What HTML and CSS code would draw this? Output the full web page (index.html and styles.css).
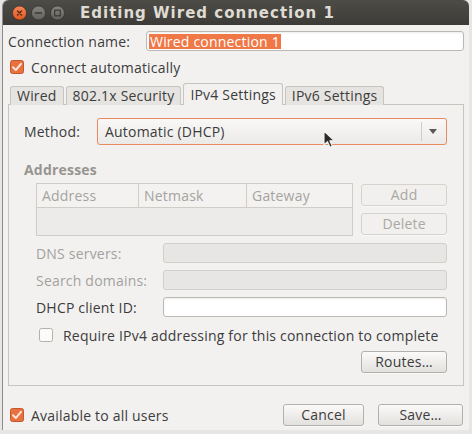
FILE: index.html
```html
<!DOCTYPE html>
<html lang="en">
<head>
  <meta charset="UTF-8">
  <title>Editing Wired connection 1</title>
  <link rel="stylesheet" href="styles.css">
</head>
<body>
  <div class="window">
    <div class="titlebar">
      <svg class="wm-buttons" width="56" height="16" viewBox="0 0 56 16">
        <defs>
          <linearGradient id="closeFill" x1="0" y1="0" x2="0" y2="1">
            <stop offset="0" stop-color="#f6875a"/>
            <stop offset="1" stop-color="#df5621"/>
          </linearGradient>
          <linearGradient id="greyFill" x1="0" y1="0" x2="0" y2="1">
            <stop offset="0" stop-color="#85847f"/>
            <stop offset="1" stop-color="#62615d"/>
          </linearGradient>
        </defs>
        <!-- close -->
        <circle cx="7.5" cy="8" r="7" fill="url(#closeFill)" stroke="#3a2a22" stroke-width="0.6"/>
        <path d="M5.5 6 L9.5 10 M9.5 6 L5.5 10" stroke="#5b2812" stroke-width="1.4" stroke-linecap="round"/>
        <!-- minimize -->
        <circle cx="26.5" cy="8" r="7" fill="url(#greyFill)" stroke="#2f2e2a" stroke-width="0.6"/>
        <path d="M23.5 8 L29.5 8" stroke="#3a3935" stroke-width="1.6" stroke-linecap="round"/>
        <!-- maximize -->
        <circle cx="45.5" cy="8" r="7" fill="url(#greyFill)" stroke="#2f2e2a" stroke-width="0.6"/>
        <rect x="42.7" y="5.2" width="5.6" height="5.6" fill="none" stroke="#3a3935" stroke-width="1.2"/>
      </svg>
      <div class="title">Editing Wired connection 1</div>
    </div>

    <div class="content">
      <div class="name-row">
        <span class="name-label">Connection name:</span>
        <div class="entry"><span class="selection">Wired connection 1</span></div>
      </div>

      <div class="check-row">
        <svg class="check" width="14" height="14" viewBox="0 0 14 14">
          <rect x="0.5" y="0.5" width="13" height="13" rx="2" fill="#e9713f" stroke="#c4582b"/>
          <path d="M3 7.2 L5.8 10 L11 3.8" fill="none" stroke="#fbe3d8" stroke-width="2" stroke-linecap="round" stroke-linejoin="round"/>
        </svg>
        <span>Connect automatically</span>
      </div>

      <div class="notebook">
        <div class="tabs">
          <div class="tab">Wired</div>
          <div class="tab">802.1x Security</div>
          <div class="tab active">IPv4 Settings</div>
          <div class="tab">IPv6 Settings</div>
        </div>

        <div class="page">
          <div class="method-row">
            <span class="method-label">Method:</span>
            <div class="combo">
              <span class="combo-text">Automatic (DHCP)</span>
              <span class="combo-sep"></span>
              <span class="combo-arrow"></span>
              <svg class="pointer" width="14" height="19" viewBox="0 0 14 19">
                <path d="M1 1 L1 15 L4.5 11.6 L7 17.2 L9.3 16.2 L6.8 10.8 L11.4 10.8 Z" fill="#2a2a2a" stroke="#f4f4f4" stroke-width="1.1" stroke-linejoin="round"/>
              </svg>
            </div>
          </div>

          <div class="section-title">Addresses</div>

          <div class="addresses">
            <div class="address-table">
              <div class="table-head">
                <span class="col col-address">Address</span>
                <span class="col col-netmask">Netmask</span>
                <span class="col col-gateway">Gateway</span>
              </div>
              <div class="table-body"></div>
            </div>
            <div class="address-buttons">
              <div class="button disabled">Add</div>
              <div class="button disabled">Delete</div>
            </div>
          </div>

          <div class="fields">
            <span class="field-label disabled-text">DNS servers:</span>
            <div class="entry disabled"></div>
            <span class="field-label disabled-text">Search domains:</span>
            <div class="entry disabled"></div>
            <span class="field-label">DHCP client ID:</span>
            <div class="entry"></div>
          </div>

          <div class="check-row require">
            <svg class="check" width="14" height="14" viewBox="0 0 14 14">
              <rect x="0.5" y="0.5" width="13" height="13" rx="2" fill="#fbfbfa" stroke="#b3b0ab"/>
            </svg>
            <span>Require IPv4 addressing for this connection to complete</span>
          </div>

          <div class="button routes">Routes…</div>
        </div>
      </div>

      <div class="footer">
        <div class="check-row">
          <svg class="check" width="14" height="14" viewBox="0 0 14 14">
            <rect x="0.5" y="0.5" width="13" height="13" rx="2" fill="#e9713f" stroke="#c4582b"/>
            <path d="M3 7.2 L5.8 10 L11 3.8" fill="none" stroke="#fbe3d8" stroke-width="2" stroke-linecap="round" stroke-linejoin="round"/>
          </svg>
          <span>Available to all users</span>
        </div>
        <div class="dialog-buttons">
          <div class="button cancel">Cancel</div>
          <div class="button save">Save…</div>
        </div>
      </div>
    </div>
  </div>
</body>
</html>
```

FILE: styles.css
```css
body {
  margin: 0;
  background: #e7e6e4;
  font-family: "Open Sans", "Noto Sans", sans-serif;
  font-size: 14px;
  letter-spacing: 0.2px;
  color: #3c3c3c;
}
.window {
  margin-left: 3px;
  width: 466px;
  height: 430px;
  background: #f2f1f0;
  border-radius: 6px 6px 0 0;
  box-shadow: -1px 0 0 #8d8c89, 0 1px 0 #d4d2cf;
  overflow: hidden;
}
.titlebar {
  height: 25px;
  background: linear-gradient(#4d4c47, #3c3b37);
  display: flex;
  align-items: center;
}
.wm-buttons {
  margin-left: 9px;
}
.title {
  margin-left: 12px;
  color: #dfdbd2;
  font-family: "DejaVu Sans", sans-serif;
  font-weight: bold;
  font-size: 15px;
  letter-spacing: 1px;
}
.content {
  padding: 0 5px;
  display: flex;
  flex-direction: column;
}
.name-row {
  display: flex;
  align-items: center;
  margin-top: 6px;
}
.name-label {
  width: 138px;
}
.entry {
  height: 20px;
  box-sizing: border-box;
  border: 1px solid #bcb9b4;
  border-radius: 3px;
  background: #fff;
  box-shadow: inset 0 1px 2px rgba(0, 0, 0, 0.08);
  display: flex;
  align-items: center;
}
.name-row .entry {
  width: 318px;
  padding-left: 2px;
}
.selection {
  background: #f07746;
  color: #fff;
  line-height: 15px;
  padding: 0 1px;
}
.check-row {
  display: flex;
  align-items: center;
  height: 20px;
}
.check {
  flex: none;
  margin-left: 2px;
  margin-right: 7px;
}
.content > .check-row {
  margin-top: 6px;
}
.notebook {
  margin-top: 6px;
}
.tabs {
  display: flex;
  align-items: flex-end;
  gap: 2px;
  height: 22px;
  padding-left: 2px;
  position: relative;
  z-index: 1;
  margin-bottom: -1px;
}
.tab {
  height: 19px;
  box-sizing: border-box;
  padding: 0 6px;
  border: 1px solid #c8c5c0;
  border-bottom: none;
  border-radius: 3px 3px 0 0;
  background: #e6e4e1;
  line-height: 18px;
}
.tab.active {
  height: 22px;
  background: #f2f1f0;
  line-height: 21px;
}
.page {
  border: 1px solid #c8c5c0;
  padding: 13px 16px 12px 15px;
  display: flex;
  flex-direction: column;
}
.method-row {
  display: flex;
  align-items: center;
}
.method-label {
  width: 73px;
}
.combo {
  flex: 1;
  height: 27px;
  box-sizing: border-box;
  border: 1px solid #e98a5e;
  border-radius: 3px;
  background: linear-gradient(#f9f8f7, #eceae8);
  display: flex;
  align-items: center;
  position: relative;
}
.combo-text {
  flex: 1;
  padding-left: 7px;
}
.combo-sep {
  width: 1px;
  height: 19px;
  background: #cfccc7;
}
.combo-arrow {
  margin: 0 9px 0 7px;
  border-left: 4px solid transparent;
  border-right: 4px solid transparent;
  border-top: 5px solid #5a5955;
}
.pointer {
  position: absolute;
  left: 225px;
  top: 11px;
}
.section-title {
  margin-top: 17px;
  font-weight: bold;
  color: #97958f;
  line-height: 16px;
}
.addresses {
  display: flex;
  margin-top: 5px;
  padding-left: 12px;
}
.address-table {
  width: 318px;
  height: 53px;
  box-sizing: border-box;
  border: 1px solid #d0cdc8;
  background: #ecebe9;
}
.table-head {
  display: flex;
  height: 23px;
  border-bottom: 1px solid #d0cdc8;
  background: #f3f2f1;
}
.col {
  padding-left: 5px;
  line-height: 23px;
  color: #a5a39f;
  box-sizing: border-box;
}
.col-address {
  width: 102px;
  border-right: 1px solid #d0cdc8;
}
.col-netmask {
  width: 108px;
  border-right: 1px solid #d0cdc8;
}
.col-gateway {
  flex: 1;
}
.address-buttons {
  margin-left: 8px;
  width: 86px;
  display: flex;
  flex-direction: column;
  gap: 7px;
  padding-top: 1px;
}
.button {
  height: 22px;
  box-sizing: border-box;
  border: 1px solid #b3b0ab;
  border-radius: 3px;
  background: linear-gradient(#fbfaf9, #e3e1de);
  box-shadow: 0 1px 0 rgba(255, 255, 255, 0.6);
  text-align: center;
  line-height: 20px;
}
.button.disabled {
  border-color: #d6d3ce;
  background: #f1f0ee;
  color: #aaa8a4;
}
.fields {
  display: grid;
  grid-template-columns: 127px 1fr;
  row-gap: 7px;
  align-items: center;
  margin-top: 7px;
  padding-left: 12px;
}
.entry.disabled {
  background: #e7e6e4;
  border-color: #d2cfca;
  box-shadow: none;
}
.disabled-text {
  color: #a3a19d;
}
.require {
  margin-top: 8px;
  padding-left: 13px;
}
.require .check {
  margin-right: 10px;
}
.routes {
  align-self: flex-end;
  width: 86px;
  margin-top: 6px;
}
.footer {
  display: flex;
  align-items: center;
  justify-content: space-between;
  padding-top: 18px;
}
.dialog-buttons {
  display: flex;
  gap: 14px;
  margin-right: 1px;
}
.cancel {
  width: 81px;
}
.save {
  width: 85px;
}
```
